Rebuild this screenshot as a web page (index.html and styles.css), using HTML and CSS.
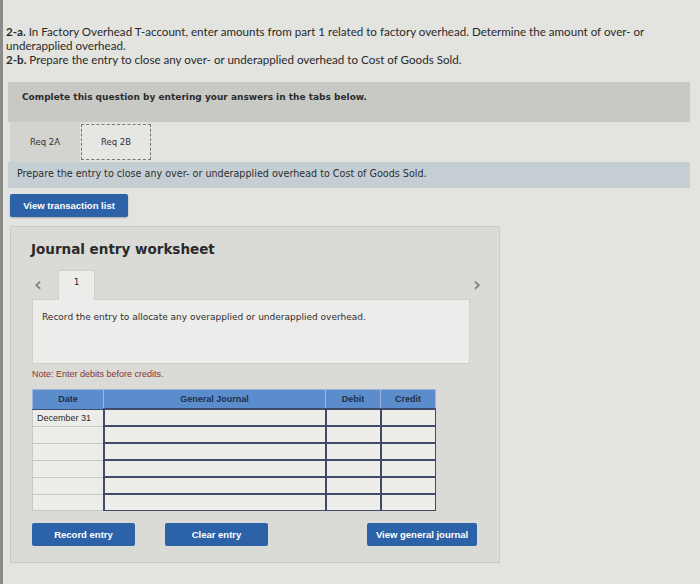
FILE: index.html
```html
<!DOCTYPE html>
<html lang="en">

<head>
    <meta charset="UTF-8">
    <title>Journal entry worksheet</title>
    <link rel="stylesheet" href="styles.css">
</head>

<body>
    <!-- Question text -->
    <div class="intro">
        <p><b>2-a.</b> In Factory Overhead T-account, enter amounts from part 1 related to factory overhead. Determine the amount of over- or<br>underapplied overhead.</p>
        <p><b>2-b.</b> Prepare the entry to close any over- or underapplied overhead to Cost of Goods Sold.</p>
    </div>

    <div class="complete-bar">Complete this question by entering your answers in the tabs below.</div>

    <!-- Tabs -->
    <div class="tabs">
        <div class="tab">Req 2A</div>
        <div class="tab active">Req 2B</div>
    </div>

    <div class="prompt-bar">Prepare the entry to close any over- or underapplied overhead to Cost of Goods Sold.</div>

    <button class="btn btn-list">View transaction list</button>

    <!-- Worksheet -->
    <div class="worksheet">
        <h2>Journal entry worksheet</h2>

        <div class="nav-row">
            <span class="arrow">&lsaquo;</span>
            <div class="step-tab">1</div>
            <span class="spacer"></span>
            <span class="arrow">&rsaquo;</span>
        </div>

        <div class="record-box">Record the entry to allocate any overapplied or underapplied overhead.</div>

        <p class="note">Note: Enter debits before credits.</p>

        <table class="journal">
            <thead>
                <tr>
                    <th class="col-date">Date</th>
                    <th class="col-gj">General Journal</th>
                    <th class="col-num">Debit</th>
                    <th class="col-num">Credit</th>
                </tr>
            </thead>
            <tbody>
                <tr><td class="date">December 31</td><td class="in"></td><td class="in"></td><td class="in"></td></tr>
                <tr><td class="date"></td><td class="in"></td><td class="in"></td><td class="in"></td></tr>
                <tr><td class="date"></td><td class="in"></td><td class="in"></td><td class="in"></td></tr>
                <tr><td class="date"></td><td class="in"></td><td class="in"></td><td class="in"></td></tr>
                <tr><td class="date"></td><td class="in"></td><td class="in"></td><td class="in"></td></tr>
                <tr><td class="date"></td><td class="in"></td><td class="in"></td><td class="in"></td></tr>
            </tbody>
        </table>

        <div class="actions">
            <button class="btn btn-wide">Record entry</button>
            <button class="btn btn-wide">Clear entry</button>
            <span class="spacer"></span>
            <button class="btn btn-journal">View general journal</button>
        </div>
    </div>
</body>

</html>
```

FILE: styles.css
```css
/* General */
body {
    margin: 0;
    min-height: 584px;
    background: #e3e3df;
    color: #2a2a2a;
    font-family: 'Lato', sans-serif;
    border-left: 3px solid #8a8a86;
    box-sizing: border-box;
    padding: 25px 10px 0 2px;
    overflow: hidden;
}

/* Question text */
.intro {
    font-size: 11.6px;
    line-height: 14px;
    padding-left: 1px;
}

.intro p {
    margin: 0;
}

.intro b {
    font-weight: 700;
}

/* Grey instruction bar */
.complete-bar {
    margin-top: 15px;
    margin-left: 3px;
    height: 40px;
    line-height: 30px;
    background: #c8c8c5;
    padding-left: 14px;
    font-family: 'DejaVu Sans', sans-serif;
    font-size: 9px;
    font-weight: bold;
    color: #2c2c2c;
}

/* Tabs */
.tabs {
    display: flex;
    margin-left: 5px;
    height: 40px;
}

.tab {
    width: 70px;
    display: flex;
    align-items: center;
    justify-content: center;
    font-family: 'DejaVu Sans', sans-serif;
    font-size: 8.5px;
    background: #d3d3d0;
    color: #333;
}

.tab.active {
    background: #e6e6e3;
    border: 1px dashed #777;
    margin: 2px 0 2px 1px;
    box-sizing: border-box;
}

/* Prompt bar */
.prompt-bar {
    margin-left: 3px;
    height: 26px;
    line-height: 24px;
    background: #c4ced3;
    padding-left: 9px;
    font-family: 'DejaVu Sans', sans-serif;
    font-size: 9.6px;
    color: #2f2f2f;
}

/* Buttons */
.btn {
    border: none;
    border-radius: 2px;
    background: #2c62a8;
    color: white;
    font-family: 'Liberation Sans', sans-serif;
    font-size: 9.5px;
    font-weight: bold;
    cursor: pointer;
    padding: 0;
}

.btn-list {
    display: block;
    margin: 6px 0 0 5px;
    width: 118px;
    height: 23px;
    box-shadow: 0 1px 2px rgba(0, 0, 0, 0.25);
}

/* Worksheet panel */
.worksheet {
    margin: 9px 0 0 5px;
    width: 490px;
    height: 337px;
    box-sizing: border-box;
    background: #dadad6;
    border: 1px solid #cacac6;
    padding: 12px 0 0 21px;
}

.worksheet h2 {
    margin: 0 0 0 -1px;
    font-family: 'DejaVu Sans', sans-serif;
    font-size: 13.5px;
    font-weight: bold;
    color: #2a2a2a;
    line-height: 20px;
}

.nav-row {
    display: flex;
    align-items: flex-end;
    width: 449px;
    margin-top: 10px;
    height: 30px;
}

.arrow {
    font-family: 'DejaVu Sans', sans-serif;
    font-size: 20px;
    color: #777;
    line-height: 24px;
    align-self: center;
}

.nav-row .arrow:first-child {
    margin-left: 2px;
    margin-right: 16px;
}

.step-tab {
    width: 37px;
    height: 30px;
    box-sizing: border-box;
    background: #ececea;
    border: 1px solid #cfcfcc;
    border-bottom: none;
    text-align: center;
    line-height: 22px;
    font-size: 9px;
    font-family: 'DejaVu Sans', sans-serif;
    position: relative;
    top: 1px;
}

.spacer {
    flex: 1;
}

.record-box {
    width: 438px;
    height: 65px;
    box-sizing: border-box;
    background: #ececea;
    border: 1px solid #cfcfcc;
    padding: 12px 9px;
    font-family: 'DejaVu Sans', sans-serif;
    font-size: 9px;
    color: #2e2e2e;
}

.note {
    margin: 5px 0 10px;
    font-family: 'Liberation Sans', sans-serif;
    font-size: 9px;
    color: #8a3434;
}

/* Journal table */
.journal {
    border-collapse: collapse;
    width: 404px;
    font-family: 'Liberation Sans', sans-serif;
    font-size: 9px;
}

.journal th {
    background: #5b8dcc;
    color: #1f2f4a;
    font-weight: bold;
    height: 18px;
    padding: 0;
    border: 1px solid #9fb6d6;
    border-bottom: 1px solid #3c4d74;
}

.col-date {
    width: 70px;
}

.col-num {
    width: 54px;
}

.journal td {
    height: 15px;
    padding: 0;
}

.journal td.date {
    background: #ecece9;
    border: 1px solid #c7c7c3;
    padding-left: 4px;
    color: #2b2b2b;
}

.journal td.in {
    background: #ededea;
    border: 2px solid #3f4a6c;
    border-width: 2px 1px 1px 2px;
}

/* Bottom buttons */
.actions {
    display: flex;
    width: 445px;
    margin-top: 12px;
    gap: 30px;
}

.btn-wide {
    width: 103px;
    height: 23px;
}

.btn-journal {
    width: 110px;
    height: 23px;
}
```
